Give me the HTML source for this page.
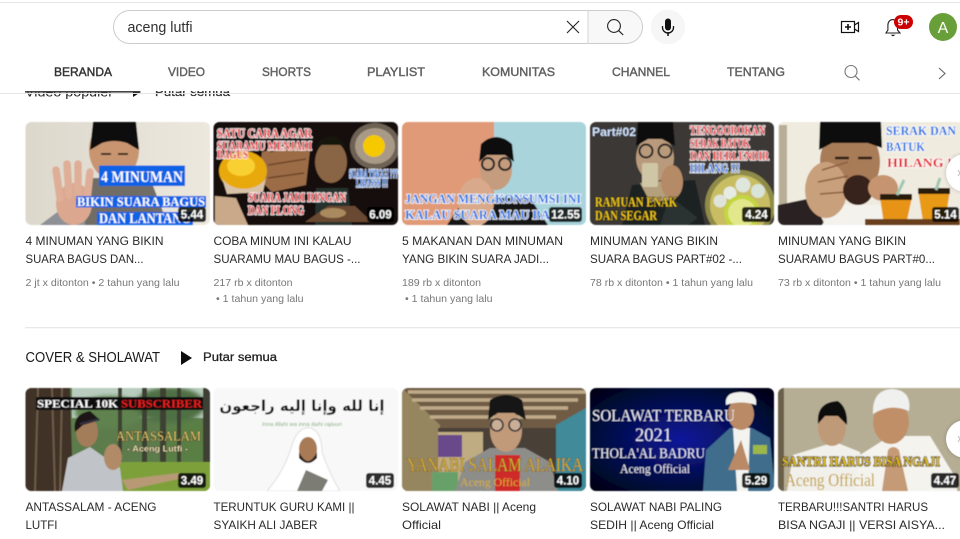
<!DOCTYPE html>
<html lang="id"><head><meta charset="utf-8"><title>aceng lutfi</title>
<style>
html,body{margin:0;padding:0;background:#fff;width:960px;height:539px;overflow:hidden}
svg{display:block;font-family:"Liberation Sans",Arial,sans-serif}
.tab{font-size:12px;fill:#606060;stroke:#606060;stroke-width:.4}
.ti{font-size:12px;fill:#2a2a2a}
.me{font-size:10.5px;fill:#777}
.bd{font-size:11.5px;font-weight:bold;fill:#fff;text-anchor:middle}
.ser{font-family:"Liberation Serif",serif}
.b{font-weight:bold}
.red{fill:#e3171b;stroke:#fff;stroke-width:1.5;paint-order:stroke;font-weight:bold;font-size:13px;font-family:"Liberation Serif",serif}
.blu{fill:#1a6fe0;stroke:#fff;stroke-width:1.5;paint-order:stroke;font-weight:bold;font-size:13px;font-family:"Liberation Serif",serif}
.yel{fill:#e8c21a;stroke:#111;stroke-width:1.3;paint-order:stroke;font-weight:bold;font-size:14px;font-family:"Liberation Serif",serif}
</style></head><body>
<svg width="960" height="539" viewBox="0 0 960 539" xmlns="http://www.w3.org/2000/svg">
<defs>
<filter id="bl" x="-5%" y="-5%" width="110%" height="110%"><feGaussianBlur stdDeviation=".5"/></filter>
<filter id="bs" x="-10%" y="-10%" width="120%" height="120%"><feGaussianBlur stdDeviation="2"/></filter>
<filter id="sh" x="-30%" y="-30%" width="160%" height="160%"><feGaussianBlur stdDeviation="2"/></filter>
<clipPath id="c1"><rect x="25.5" y="122" width="184.5" height="103" rx="6"/></clipPath>
<clipPath id="c2"><rect x="213.5" y="122" width="184.5" height="103" rx="6"/></clipPath>
<clipPath id="c3"><rect x="402" y="122" width="184" height="103" rx="6"/></clipPath>
<clipPath id="c4"><rect x="590" y="122" width="184" height="103" rx="6"/></clipPath>
<clipPath id="c5"><rect x="778" y="122" width="190" height="103" rx="6"/></clipPath>
<clipPath id="c6"><rect x="25.5" y="388" width="184.5" height="103" rx="6"/></clipPath>
<clipPath id="c7"><rect x="213.5" y="388" width="184.5" height="103" rx="6"/></clipPath>
<clipPath id="c8"><rect x="402" y="388" width="184" height="103" rx="6"/></clipPath>
<clipPath id="c9"><rect x="590" y="388" width="184" height="103" rx="6"/></clipPath>
<clipPath id="c10"><rect x="778" y="388" width="190" height="103" rx="6"/></clipPath>
<radialGradient id="navy" cx=".5" cy=".5" r=".65"><stop offset="0" stop-color="#0a1a9a"/><stop offset="1" stop-color="#020418"/></radialGradient>
<linearGradient id="wall1" x1="0" x2="1" y1="0" y2="0"><stop offset="0" stop-color="#dcd8cc"/><stop offset="1" stop-color="#ece8de"/></linearGradient>
</defs>

<!-- Clipped row above -->
<svg x="0" y="91" width="960" height="10">
<text x="25" y="5.5" font-size="13" fill="#222" textLength="88" lengthAdjust="spacingAndGlyphs">Video populer</text>
<path d="M133 -4L141 1L133 6Z" fill="#111"/>
<text x="155" y="5" font-size="12" fill="#333" stroke="#333" stroke-width=".3" textLength="75" lengthAdjust="spacingAndGlyphs">Putar semua</text>
</svg>
<rect x="25" y="91" width="115" height="1.6" fill="#444"/>

<!-- Header -->
<rect x="0" y="2" width="960" height="1" fill="#e6e6e6"/>
<rect x="0" y="93" width="960" height="1" fill="#e5e5e5"/>
<path d="M588 10.5H626a16.5 16.5 0 0 1 0 33H588Z" fill="#f8f8f8"/>
<rect x="113.5" y="10.5" width="529" height="33" rx="16.5" fill="none" stroke="#ccc"/>
<rect x="587.5" y="10.5" width="1" height="33" fill="#d3d3d3"/>
<text x="127.5" y="32" font-size="15" fill="#303030" textLength="65" lengthAdjust="spacingAndGlyphs">aceng lutfi</text>
<path d="M567 21L579 33M579 21L567 33" stroke="#222" stroke-width="1.1" fill="none"/>
<circle cx="614" cy="26" r="6.4" fill="none" stroke="#222" stroke-width="1.1"/><path d="M618.6 30.6L623.2 35" stroke="#222" stroke-width="1.2"/>
<circle cx="668" cy="27" r="17.3" fill="#f6f6f6"/>
<rect x="665" y="18.5" width="6" height="12" rx="3" fill="#111"/>
<path d="M662.5 26v1.5a5.5 5.5 0 0 0 11 0V26" fill="none" stroke="#111" stroke-width="1.3"/><rect x="667.3" y="32" width="1.5" height="4" fill="#111"/>
<rect x="841.5" y="21.5" width="13" height="11" fill="none" stroke="#111" stroke-width="1.2"/>
<path d="M845 27H851M848 24V30" stroke="#111" stroke-width="1.6"/>
<path d="M854.5 25L858.5 22.5V31.5L854.5 29" fill="none" stroke="#111" stroke-width="1.2"/>
<path d="M886 33H900L897.5 30V25a4.8 5.5 0 0 0-9.6 0V30Z" fill="none" stroke="#222" stroke-width="1.1"/>
<path d="M890.5 34.8h5l-2.5 1.6Z" fill="#111"/>
<rect x="894" y="15" width="19" height="14" rx="7" fill="#cc0000"/>
<text x="903.5" y="25.5" font-size="10.5" font-weight="bold" fill="#fff" text-anchor="middle">9+</text>
<circle cx="943" cy="27" r="14" fill="#689f38"/>
<text x="943" y="33" font-size="16" fill="#fff" text-anchor="middle">A</text>

<text class="tab" x="54" y="76" textLength="58" lengthAdjust="spacingAndGlyphs" style="fill:#333;stroke:#333">BERANDA</text>
<text class="tab" x="168" y="76" textLength="37" lengthAdjust="spacingAndGlyphs">VIDEO</text>
<text class="tab" x="262" y="76" textLength="49" lengthAdjust="spacingAndGlyphs">SHORTS</text>
<text class="tab" x="367" y="76" textLength="58" lengthAdjust="spacingAndGlyphs">PLAYLIST</text>
<text class="tab" x="482" y="76" textLength="73" lengthAdjust="spacingAndGlyphs">KOMUNITAS</text>
<text class="tab" x="612" y="76" textLength="58" lengthAdjust="spacingAndGlyphs">CHANNEL</text>
<text class="tab" x="727" y="76" textLength="58" lengthAdjust="spacingAndGlyphs">TENTANG</text>
<circle cx="851" cy="71.5" r="6" fill="none" stroke="#777" stroke-width="1.1"/><path d="M855.3 76L859.5 80.3" stroke="#777" stroke-width="1.2"/>
<path d="M939 68L945 73.5L939 79" fill="none" stroke="#666" stroke-width="1.1"/>

<g filter="url(#bl)">
<!-- T1 -->
<g clip-path="url(#c1)">
<rect x="25" y="122" width="186" height="103" fill="url(#wall1)"/>
<path d="M40 225L60 210H105L100 225Z" fill="#8d9196"/>
<path d="M88 178H150L168 225H85Z" fill="#6f6c66"/>
<ellipse cx="114" cy="150" rx="25" ry="30" fill="#c8956f"/>
<path d="M93 122H136L139 150L127 143Q114 139 102 143L90 150Z" fill="#0f0f0f"/>
<path d="M101 154h10M118 154h10" stroke="#3a2518" stroke-width="2"/>
<path d="M105 168q9 5 18 0" stroke="#7a4a38" stroke-width="2" fill="none"/>
<ellipse cx="74" cy="204" rx="18" ry="21" fill="#dca78f"/>
<path d="M60 198L56 170M69 195L67 164M78 195L78 164M87 200L90 172" stroke="#dfae97" stroke-width="7.5" stroke-linecap="round"/>
<rect x="99" y="165.5" width="86" height="20.5" fill="#0f62e6"/>
<rect x="76" y="196" width="130" height="11.5" fill="#0f62e6"/>
<rect x="97" y="212" width="96" height="14" fill="#0f62e6"/>
<text class="ser b" x="101" y="182" font-size="16" fill="#fff" textLength="82" lengthAdjust="spacingAndGlyphs">4 MINUMAN</text>
<text class="ser b" x="77" y="206" font-size="13" fill="#fff" textLength="128" lengthAdjust="spacingAndGlyphs">BIKIN SUARA BAGUS</text>
<text class="ser b" x="99" y="223" font-size="14.5" fill="#fff" textLength="92" lengthAdjust="spacingAndGlyphs">DAN LANTANG</text>
<rect x="178" y="207" width="28" height="15" rx="3" fill="#000" fill-opacity=".82"/>
<text class="bd" x="192" y="218.5">5.44</text>
</g>
<!-- T2 -->
<g clip-path="url(#c2)">
<rect x="213" y="122" width="186" height="103" fill="#14110e"/>
<path d="M262 152L298 142L310 150L306 185L272 192L258 178Z" fill="#9c6c46"/>
<path d="M270 152l35-8M268 165l38-6M268 178l36-5" stroke="#6c4528" stroke-width="1.5"/>
<path d="M215 196L236 198L248 225H215Z" fill="#c9a98a"/>
<ellipse cx="243" cy="171" rx="24" ry="20" fill="#e8a908"/><ellipse cx="241" cy="166" rx="14" ry="10" fill="#f8d030"/>
<path d="M222 178a24 18 0 0 0 44 0l-3 14-36 2Z" fill="#d9c3a8"/>
<path d="M315 225L316 188H348L352 225Z" fill="#26302e"/>
<ellipse cx="331" cy="162" rx="16" ry="21" fill="#8a6545"/>
<path d="M316 150a15 14 0 0 1 30 0L342 145H320Z" fill="#151210"/>
<ellipse cx="375" cy="146" rx="25" ry="23" fill="#6e6254"/>
<ellipse cx="375" cy="146" rx="20" ry="18" fill="#a89a86"/>
<circle cx="374" cy="146" r="11" fill="#f5c800"/>
<path d="M305 222L328 206H355L372 222Z" fill="#6b4a30"/>
<ellipse cx="333" cy="213" rx="13" ry="5" fill="#a98a5e"/>
<text class="red" x="217" y="137.5" font-size="16" textLength="95" lengthAdjust="spacingAndGlyphs">SATU CARA AGAR</text>
<text class="red" x="217" y="150" font-size="13" textLength="95" lengthAdjust="spacingAndGlyphs">SUARAMU MENJADI</text>
<text class="red" x="217" y="158.500" font-size="11" textLength="31" lengthAdjust="spacingAndGlyphs">BAGUS</text>
<text class="red" x="248" y="201.500" font-size="15" textLength="98" lengthAdjust="spacingAndGlyphs">SUARA JADI RINGAN</text>
<text class="red" x="248" y="214.500" font-size="15" textLength="56" lengthAdjust="spacingAndGlyphs">DAN PLONG</text>
<text class="blu" x="349" y="178" font-size="8" stroke-width="1" textLength="49" lengthAdjust="spacingAndGlyphs">SUARA TINGGI ???</text>
<text class="blu" x="356" y="187" font-size="8" stroke-width="1" textLength="32" lengthAdjust="spacingAndGlyphs">LIBASSS !!!</text>
<rect x="367" y="207" width="27" height="15" rx="3" fill="#000" fill-opacity=".82"/>
<text class="bd" x="380.5" y="218.5">6.09</text>
</g>
<!-- T3 -->
<g clip-path="url(#c3)">
<rect x="402" y="122" width="92" height="103" fill="#e09a78"/>
<rect x="494" y="122" width="92" height="103" fill="#a9d4dc"/>
<path d="M447 225L465 198H530L548 225Z" fill="#141414"/>
<ellipse cx="496" cy="170" rx="16" ry="20" fill="#c69c7e"/>
<path d="M479 162L481 144Q496 130 512 144L514 162L505 155H487Z" fill="#111"/>
<circle cx="488" cy="164" r="6" fill="none" stroke="#222" stroke-width="2"/><circle cx="505" cy="164" r="6" fill="none" stroke="#222" stroke-width="2"/>
<ellipse cx="476" cy="202" rx="18" ry="24" fill="#d8a98a"/>
<text class="blu" x="405" y="203" font-size="20" stroke-width="1.3" textLength="176" lengthAdjust="spacingAndGlyphs">JANGAN MENGKONSUMSI INI</text>
<text class="blu" x="405" y="219" font-size="16" stroke-width="1.3" textLength="145" lengthAdjust="spacingAndGlyphs">KALAU SUARA MAU BA</text>
<rect x="549" y="207" width="33" height="15" rx="3" fill="#000" fill-opacity=".82"/>
<text class="bd" x="565.5" y="218.5">12.55</text>
</g>
<!-- T4 -->
<g clip-path="url(#c4)">
<rect x="590" y="122" width="184" height="103" fill="#3a3936"/>
<path d="M622 225L632 185L695 180L705 225Z" fill="#1c2224"/>
<path d="M640 183L675 180L672 200L650 202Z" fill="#b4a07c"/>
<ellipse cx="655" cy="158" rx="19" ry="23" fill="#b99a7c"/>
<path d="M636 146L638 122H673L675 146L662 139H648Z" fill="#0c0c0c"/>
<circle cx="646" cy="151" r="6.5" fill="none" stroke="#222" stroke-width="2"/><circle cx="665" cy="151" r="6.5" fill="none" stroke="#222" stroke-width="2"/>
<rect x="642" y="163" width="16" height="24" rx="2" fill="#cfc6a6"/>
<ellipse cx="672" cy="182" rx="11" ry="17" fill="#b58a66"/>
<path d="M670 196L698 218L688 225H660Z" fill="#2a3030"/>
<circle cx="740" cy="205" r="35" fill="#8f8b4a"/>
<circle cx="740" cy="205" r="30" fill="#c9bd63"/>
<circle cx="743" cy="185" r="7.500" fill="#dfe6dc"/><circle cx="730" cy="193" r="6.500" fill="#e6ece4"/><circle cx="758" cy="191" r="7" fill="#d9e4d8"/><circle cx="720" cy="201" r="6.500" fill="#dfe4da"/>
<circle cx="742" cy="213" r="18" fill="#c3d63f"/><circle cx="742" cy="213" r="14" fill="#e1e78a"/>
<text x="592" y="136" font-size="12" font-weight="bold" fill="#cfe3ff" textLength="44" lengthAdjust="spacingAndGlyphs">Part#02</text>
<text class="red" x="690" y="134.500" font-size="13" textLength="75" lengthAdjust="spacingAndGlyphs">TENGGOROKAN</text>
<text class="red" x="690" y="147.500" font-size="13" textLength="60" lengthAdjust="spacingAndGlyphs">SERAK BATUK</text>
<text class="red" x="690" y="160" font-size="13" textLength="79" lengthAdjust="spacingAndGlyphs">DAN BERLENDIR</text>
<text class="blu" x="690" y="172.500" font-size="13" textLength="50" lengthAdjust="spacingAndGlyphs">HILANG !!!</text>
<text class="yel" x="595" y="206.500" textLength="82" lengthAdjust="spacingAndGlyphs">RAMUAN ENAK</text>
<text class="yel" x="595" y="220" textLength="62" lengthAdjust="spacingAndGlyphs">DAN SEGAR</text>
<rect x="742" y="207" width="29" height="15" rx="3" fill="#000" fill-opacity=".82"/>
<text class="bd" x="756.5" y="218.5">4.24</text>
</g>
<!-- T5 -->
<g clip-path="url(#c5)">
<rect x="778" y="122" width="190" height="103" fill="#f0ebdf"/>
<rect x="779" y="125" width="8" height="80" fill="#b8ad96"/>
<path d="M778 205L812 198L825 225H778Z" fill="#2a2420"/>
<path d="M822 225L835 205H880L895 225Z" fill="#f4f2ec"/>
<ellipse cx="850" cy="162" rx="30" ry="36" fill="#a97c58"/>
<path d="M820 122H881L882 148L868 143H832L819 150Z" fill="#0e0e0e"/>
<path d="M835 158h14M858 158h14" stroke="#2b1a10" stroke-width="2.500"/>
<ellipse cx="826" cy="190" rx="21" ry="28" fill="#c9a07c"/>
<path d="M822 170l26-8M818 182l30-6M820 194l26-2" stroke="#8a5f3f" stroke-width="1.500"/>
<circle cx="858" cy="190" r="15" fill="#38201a"/>
<ellipse cx="883" cy="188" rx="15" ry="13" fill="#c69470"/>
<path d="M880 197H912L906 225H884Z" fill="#e79412"/><rect x="880" y="194" width="32" height="6" fill="#2c1a10"/>
<path d="M918 190H950L945 222H923Z" fill="#e89a18"/><rect x="918" y="188" width="32" height="6" fill="#2c1a10"/>
<path d="M897 195L904 180" stroke="#9fc7b2" stroke-width="3"/><path d="M936 190L940 178" stroke="#9fc7b2" stroke-width="3"/>
<rect x="865" y="219" width="95" height="6" fill="#6b3f1d"/>
<text class="blu" x="886" y="135" font-size="14" textLength="70" lengthAdjust="spacingAndGlyphs">SERAK DAN</text>
<text class="blu" x="886" y="151" font-size="14" textLength="39" lengthAdjust="spacingAndGlyphs">BATUK</text>
<text class="red" x="887" y="167" font-size="16" textLength="74" lengthAdjust="spacingAndGlyphs">HILANG !!!</text>
<rect x="932" y="207" width="27" height="15" rx="3" fill="#000" fill-opacity=".82"/>
<text class="bd" x="945.5" y="218.5">5.14</text>
</g>
<!-- T6 -->
<g clip-path="url(#c6)">
<rect x="25" y="388" width="186" height="103" fill="#5d7c4c"/>
<rect x="72" y="388" width="139" height="30" fill="#b8cdbe"/>
<g filter="url(#bs)"><ellipse cx="110" cy="412" rx="35" ry="16" fill="#5f8250"/><ellipse cx="170" cy="405" rx="35" ry="18" fill="#4f7044"/><ellipse cx="190" cy="445" rx="30" ry="25" fill="#5a7f45"/></g>
<path d="M118 388h4v75h-4zM142 388h5v75h-5zM160 388h6v85h-6zM177 388h4v80h-4zM203 388h8v90h-8z" fill="#3e3f30"/>
<rect x="72" y="462" width="139" height="29" fill="#7ea03a"/>
<path d="M122 480L178 473L183 478L128 490Z" fill="#b79a74"/>
<path d="M25 388H70L73 491H25Z" fill="#3f3225"/>
<path d="M38 388L35 491M52 388L55 491M62 388L60 491" stroke="#6e5c48" stroke-width="2"/>
<path d="M62 491L68 458L90 447L120 468L123 491Z" fill="#c0c3c7"/>
<ellipse cx="87" cy="432" rx="11" ry="15" fill="#a37c5a"/>
<path d="M75 432Q72 414 90 411L100 420L83 425Z" fill="#1a1614"/>
<path d="M80 424l19-5" stroke="#334" stroke-width="2"/>
<ellipse cx="113" cy="457" rx="9" ry="13" fill="#b18a68"/>
<rect x="36" y="397" width="84" height="13" fill="#111"/><rect x="120" y="397" width="83" height="13" fill="#111"/>
<text class="ser b" x="37" y="407.5" font-size="12" fill="#fff" textLength="81" lengthAdjust="spacingAndGlyphs">SPECIAL 10K</text>
<text class="ser b" x="121" y="407.5" font-size="12" fill="#e81c1c" textLength="81" lengthAdjust="spacingAndGlyphs">SUBSCRIBER</text>
<text class="ser" x="116" y="440.5" font-size="14" fill="#e0c66a" stroke="#111" stroke-width=".8" paint-order="stroke" textLength="85" lengthAdjust="spacingAndGlyphs">ANTASSALAM</text>
<text x="127" y="451.5" font-size="8.5" font-weight="bold" fill="#e3d9a8" stroke="#222" stroke-width=".8" paint-order="stroke" textLength="61" lengthAdjust="spacingAndGlyphs">- Aceng Lutfi -</text>
<rect x="178" y="473" width="28" height="15" rx="3" fill="#000" fill-opacity=".82"/>
<text class="bd" x="192" y="484.5">3.49</text>
</g>
<!-- T7 -->
<g clip-path="url(#c7)">
<rect x="213" y="388" width="186" height="103" fill="#f8f8f8"/>
<text x="302" y="411" font-size="15" font-weight="bold" fill="#111" text-anchor="middle" style="font-family:'DejaVu Sans',sans-serif">إنا لله وإنا إليه راجعون</text>
<text x="262" y="426" font-size="5.5" font-style="italic" fill="#7fae78" textLength="80" lengthAdjust="spacingAndGlyphs">Inna lillahi wa inna ilaihi rajiuun</text>
<path d="M267 491Q285 470 292 445Q298 426 311 428Q322 432 322 452Q330 475 340 491Z" fill="#fff" stroke="#dedede"/>
<ellipse cx="308" cy="449" rx="9" ry="12" fill="#a87a55"/>
<path d="M299 452Q308 470 317 452L317 458Q308 468 299 458Z" fill="#2b1d15"/>
<path d="M297 491L306 470L328 480L322 491Z" fill="#7c7c75"/>
<rect x="366" y="473" width="28" height="15" rx="3" fill="#000" fill-opacity=".82"/>
<text class="bd" x="380" y="484.5">4.45</text>
</g>
<!-- T8 -->
<g clip-path="url(#c8)">
<rect x="402" y="388" width="184" height="103" fill="#6f5c44"/>
<path d="M402 388L440 425V491H402Z" fill="#968660"/>
<path d="M556 425L586 408V491H556Z" fill="#3f8a9a"/>
<path d="M408 392H586M412 400H578M420 408H568M430 417H556" stroke="#c0aa88" stroke-width="3.5"/>
<rect x="438" y="428" width="118" height="63" fill="#4a3f38"/>
<rect x="438" y="432" width="45" height="59" fill="#c0ac82"/><rect x="438" y="435" width="24" height="22" fill="#6a4a8a"/><rect x="432" y="472" width="26" height="19" fill="#67a06a"/>
<path d="M455 491L465 462L490 448H525L550 462L558 491Z" fill="#8d8d8a"/>
<path d="M495 455H520V491H495Z" fill="#cf2a2c"/>
<ellipse cx="506" cy="431" rx="16" ry="21" fill="#c19a7a"/>
<path d="M488 420L490 400Q506 390 522 400L526 420L515 413H497Z" fill="#131313"/>
<circle cx="497" cy="425" r="6" fill="#ddd" fill-opacity=".3" stroke="#333" stroke-width="1.6"/><circle cx="515" cy="425" r="6" fill="#ddd" fill-opacity=".3" stroke="#333" stroke-width="1.6"/>
<text class="ser" x="407" y="471" font-size="19" fill="#d8ae34" stroke="#3a2a08" stroke-width=".6" paint-order="stroke" textLength="176" lengthAdjust="spacingAndGlyphs">YANABI SALAM ALAIKA</text>
<text class="ser" x="460" y="486" font-size="12" fill="#d8ae34" textLength="70" lengthAdjust="spacingAndGlyphs">Aceng Official</text>
<rect x="554" y="473" width="28" height="15" rx="3" fill="#000" fill-opacity=".82"/>
<text class="bd" x="568" y="484.5">4.10</text>
</g>
<!-- T9 -->
<g clip-path="url(#c9)">
<rect x="590" y="388" width="184" height="103" fill="url(#navy)"/>
<path d="M703 491L706 450L730 428H752L770 438L775 491Z" fill="#3f6d8c"/>
<path d="M733 428H750L748 491H737Z" fill="#f3f3f0"/>
<ellipse cx="741" cy="414" rx="13" ry="16" fill="#b98a65"/>
<path d="M726 405Q724 392 741 392Q758 392 756 405Q741 400 726 405Z" fill="#f2f2ee"/>
<path d="M728 470L741 440L750 470Z" fill="#b98a65"/>
<rect x="753" y="445" width="14" height="9" fill="#9db848"/>
<text class="ser" x="592" y="421" font-size="17" fill="#e8e8f0" textLength="143" lengthAdjust="spacingAndGlyphs">SOLAWAT TERBARU</text>
<text class="ser" x="635" y="441" font-size="19" fill="#e8e8f0" textLength="37" lengthAdjust="spacingAndGlyphs">2021</text>
<text class="ser" x="592" y="458" font-size="15" fill="#e8e8f0" textLength="113" lengthAdjust="spacingAndGlyphs">THOLA'AL BADRU</text>
<text class="ser" x="620" y="473" font-size="13" fill="#e8e8f0" textLength="70" lengthAdjust="spacingAndGlyphs">Aceng Official</text>
<rect x="742" y="473" width="28" height="15" rx="3" fill="#000" fill-opacity=".82"/>
<text class="bd" x="756" y="484.5">5.29</text>
</g>
<!-- T10 -->
<g clip-path="url(#c10)">
<rect x="778" y="388" width="190" height="103" fill="#b6ae94"/>
<rect x="778" y="388" width="6" height="103" fill="#6a604a"/>
<path d="M787 491L793 455L835 442L860 452L865 491Z" fill="#f1f0ea"/>
<path d="M855 491L860 455L890 436L930 436L957 480V491Z" fill="#f4f3ee"/>
<ellipse cx="832" cy="428" rx="14" ry="18" fill="#bf9a78"/>
<path d="M818 424Q816 402 838 401Q848 408 847 425L838 416H825Z" fill="#111"/>
<ellipse cx="891" cy="422" rx="18" ry="22" fill="#c08f68"/>
<path d="M873 414Q872 390 892 389Q912 390 909 411Q890 403 873 414Z" fill="#f0f0ee"/>
<path d="M882 491L888 450Q893 444 899 450L908 491Z" fill="#c59a76"/>
<text class="yel" x="782" y="466" font-size="14" stroke-width="1" textLength="158" lengthAdjust="spacingAndGlyphs">SANTRI HARUS BISA NGAJI</text>
<text class="ser" x="785" y="486" font-size="18" fill="#c4a03a" textLength="90" lengthAdjust="spacingAndGlyphs">Aceng Official</text>
<rect x="931" y="473" width="28" height="15" rx="3" fill="#000" fill-opacity=".82"/>
<text class="bd" x="945" y="484.5">4.47</text>
</g>
</g>

<!-- Carousel buttons -->
<circle cx="965" cy="173" r="19" fill="#000" opacity=".2" filter="url(#sh)"/><circle cx="965" cy="173" r="19" fill="#fff"/>
<path d="M958 170L960 173L958 176" fill="none" stroke="#bbb"/>
<circle cx="965" cy="439" r="19" fill="#000" opacity=".2" filter="url(#sh)"/><circle cx="965" cy="439" r="19" fill="#fff"/>
<path d="M958 436L960 439L958 442" fill="none" stroke="#bbb"/>

<!-- Row 1 text -->
<text class="ti" x="25.5" y="245" textLength="138" lengthAdjust="spacingAndGlyphs">4 MINUMAN YANG BIKIN</text>
<text class="ti" x="25.5" y="263" textLength="118" lengthAdjust="spacingAndGlyphs">SUARA BAGUS DAN...</text>
<text class="me" x="25.5" y="286" textLength="154" lengthAdjust="spacingAndGlyphs">2 jt x ditonton • 2 tahun yang lalu</text>
<text class="ti" x="213.5" y="245" textLength="138" lengthAdjust="spacingAndGlyphs">COBA MINUM INI KALAU</text>
<text class="ti" x="213.5" y="263" textLength="147" lengthAdjust="spacingAndGlyphs">SUARAMU MAU BAGUS -...</text>
<text class="me" x="213.5" y="286" textLength="79" lengthAdjust="spacingAndGlyphs">217 rb x ditonton</text>
<text class="me" x="216" y="302" textLength="87.5" lengthAdjust="spacingAndGlyphs">• 1 tahun yang lalu</text>
<text class="ti" x="402" y="245" textLength="161" lengthAdjust="spacingAndGlyphs">5 MAKANAN DAN MINUMAN</text>
<text class="ti" x="402" y="263" textLength="147" lengthAdjust="spacingAndGlyphs">YANG BIKIN SUARA JADI...</text>
<text class="me" x="402" y="286" textLength="79" lengthAdjust="spacingAndGlyphs">189 rb x ditonton</text>
<text class="me" x="405" y="302" textLength="87.5" lengthAdjust="spacingAndGlyphs">• 1 tahun yang lalu</text>
<text class="ti" x="590" y="245" textLength="128" lengthAdjust="spacingAndGlyphs">MINUMAN YANG BIKIN</text>
<text class="ti" x="590" y="263" textLength="152" lengthAdjust="spacingAndGlyphs">SUARA BAGUS PART#02 -...</text>
<text class="me" x="590" y="286" textLength="163" lengthAdjust="spacingAndGlyphs">78 rb x ditonton • 1 tahun yang lalu</text>
<text class="ti" x="778" y="245" textLength="128" lengthAdjust="spacingAndGlyphs">MINUMAN YANG BIKIN</text>
<text class="ti" x="778" y="263" textLength="157" lengthAdjust="spacingAndGlyphs">SUARAMU BAGUS PART#0...</text>
<text class="me" x="778" y="286" textLength="163" lengthAdjust="spacingAndGlyphs">73 rb x ditonton • 1 tahun yang lalu</text>

<rect x="25" y="327" width="935" height="1.3" fill="#e8e8e8"/>
<text x="25.5" y="362" font-size="14.5" fill="#1a1a1a" textLength="134.5" lengthAdjust="spacingAndGlyphs">COVER &amp; SHOLAWAT</text>
<path d="M181 351L192 358L181 365Z" fill="#0d0d0d"/>
<text x="203" y="361" font-size="12" fill="#222" stroke="#222" stroke-width=".3" textLength="74" lengthAdjust="spacingAndGlyphs">Putar semua</text>

<!-- Row 2 text -->
<text class="ti" x="25.5" y="511" textLength="131" lengthAdjust="spacingAndGlyphs">ANTASSALAM - ACENG</text>
<text class="ti" x="25.5" y="529" textLength="32" lengthAdjust="spacingAndGlyphs">LUTFI</text>
<text class="ti" x="213.5" y="511" textLength="141" lengthAdjust="spacingAndGlyphs">TERUNTUK GURU KAMI ||</text>
<text class="ti" x="213.5" y="529" textLength="104" lengthAdjust="spacingAndGlyphs">SYAIKH ALI JABER</text>
<text class="ti" x="402" y="511" textLength="134" lengthAdjust="spacingAndGlyphs">SOLAWAT NABI || Aceng</text>
<text class="ti" x="402" y="529" textLength="39" lengthAdjust="spacingAndGlyphs">Official</text>
<text class="ti" x="590" y="511" textLength="132" lengthAdjust="spacingAndGlyphs">SOLAWAT NABI PALING</text>
<text class="ti" x="590" y="529" textLength="124" lengthAdjust="spacingAndGlyphs">SEDIH || Aceng Official</text>
<text class="ti" x="778" y="511" textLength="150" lengthAdjust="spacingAndGlyphs">TERBARU!!!SANTRI HARUS</text>
<text class="ti" x="778" y="529" textLength="167" lengthAdjust="spacingAndGlyphs">BISA NGAJI || VERSI AISYA...</text>
</svg>
</body></html>
